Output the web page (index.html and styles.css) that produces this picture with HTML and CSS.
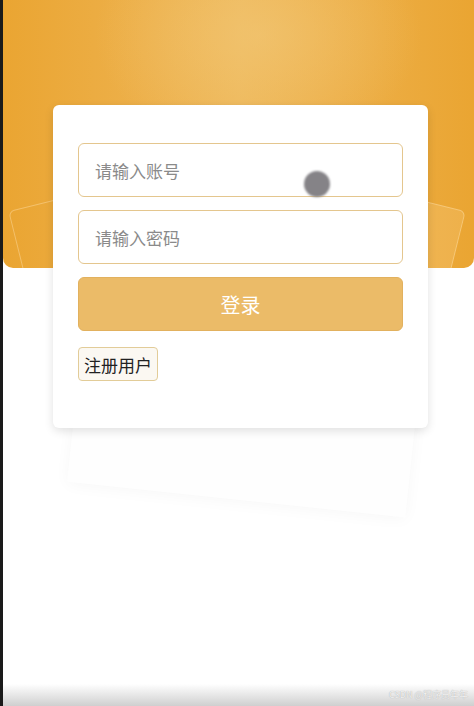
FILE: index.html
```html
<!DOCTYPE html>
<html lang="zh-CN">
<head>
    <meta charset="UTF-8">
    <meta name="viewport" content="width=device-width, initial-scale=1.0">
    <title>登录</title>
    <link rel="stylesheet" href="styles.css">
</head>
<body>
    <div class="frame">
        <div class="hero">
            <div class="hero-glow"></div>
            <div class="hero-sheet left"></div>
            <div class="hero-sheet right"></div>
        </div>
        <div class="ghost-sheet"></div>

        <div class="login-card">
            <input class="field" type="text" placeholder="请输入账号">
            <input class="field" type="password" placeholder="请输入密码">
            <button class="login-btn">登录</button>
            <div class="links">
                <button class="register-btn">注册用户</button>
            </div>
        </div>

        <!-- touch pointer from the recording -->
        <div class="touch-dot"></div>

        <div class="watermark">CSDN @程序员年年</div>
    </div>
</body>
</html>
```

FILE: styles.css
```css
* {
    box-sizing: border-box;
}
body {
    margin: 0;
    background: #fff;
    font-family: 'Noto Sans CJK SC', 'Noto Sans', sans-serif;
}
.frame {
    position: relative;
    width: 474px;
    height: 706px;
    overflow: hidden;
    border-left: 3px solid #1a1a1a;
    padding-top: 105px;
}
.hero {
    position: absolute;
    left: 0;
    top: 0;
    width: 100%;
    height: 268px;
    border-radius: 0 0 10px 10px;
    background: linear-gradient(90deg, #eaa532 0%, #edb04a 30%, #eeb85a 50%, #edb04a 70%, #eaa532 100%);
    overflow: hidden;
}
.hero-glow {
    position: absolute;
    left: 90px;
    top: -80px;
    width: 330px;
    height: 230px;
    border-radius: 50%;
    background: radial-gradient(ellipse at center, rgba(242, 200, 120, 0.6) 0%, rgba(242, 200, 120, 0) 70%);
}
.hero-sheet {
    position: absolute;
    top: 195px;
    width: 120px;
    height: 120px;
    border: 1px solid rgba(255, 225, 170, 0.45);
    border-radius: 6px;
}
.hero-sheet.left {
    left: 18px;
    transform: rotate(-14deg);
}
.hero-sheet.right {
    left: 330px;
    transform: rotate(14deg);
    background: rgba(255, 225, 170, 0.2);
}
.ghost-sheet {
    position: absolute;
    left: 70px;
    top: 370px;
    width: 340px;
    height: 130px;
    background: #fefefe;
    box-shadow: 0 2px 16px rgba(0, 0, 0, 0.035);
    transform: rotate(6deg);
}
.login-card {
    position: relative;
    width: 375px;
    height: 323px;
    margin-left: 50px;
    padding: 38px 25px 0;
    background: #fff;
    border-radius: 6px;
    box-shadow: 0 3px 10px rgba(0, 0, 0, 0.12);
    display: flex;
    flex-direction: column;
    gap: 13px;
}
.field {
    width: 100%;
    height: 54px;
    padding: 0 16px;
    border: 1px solid #e4c68e;
    border-radius: 6px;
    font-family: inherit;
    font-size: 17px;
    color: #333;
    outline: none;
}
.field::placeholder {
    color: #8a8a8a;
}
.login-btn {
    width: 100%;
    height: 54px;
    border: 1px solid #e2b15e;
    border-radius: 6px;
    background: #ebbb68;
    color: #fff;
    font-family: inherit;
    font-size: 20px;
}
.links {
    padding-top: 3px;
}
.register-btn {
    height: 34px;
    padding: 0 5px;
    border: 1px solid #e2cc98;
    border-radius: 4px;
    background: #fbf8f2;
    color: #222;
    font-family: inherit;
    font-size: 17px;
}
.touch-dot {
    position: absolute;
    left: 301px;
    top: 171px;
    width: 26px;
    height: 26px;
    border-radius: 50%;
    background: #858387;
    filter: blur(0.8px);
}
.watermark {
    position: absolute;
    left: 0;
    bottom: 0;
    width: 100%;
    height: 22px;
    padding-right: 6px;
    background: linear-gradient(#fff, #cfcfcf);
    text-align: right;
    font-size: 9px;
    line-height: 22px;
    color: #f2f2f2;
    text-shadow: 0 0 1px #999;
}
```
